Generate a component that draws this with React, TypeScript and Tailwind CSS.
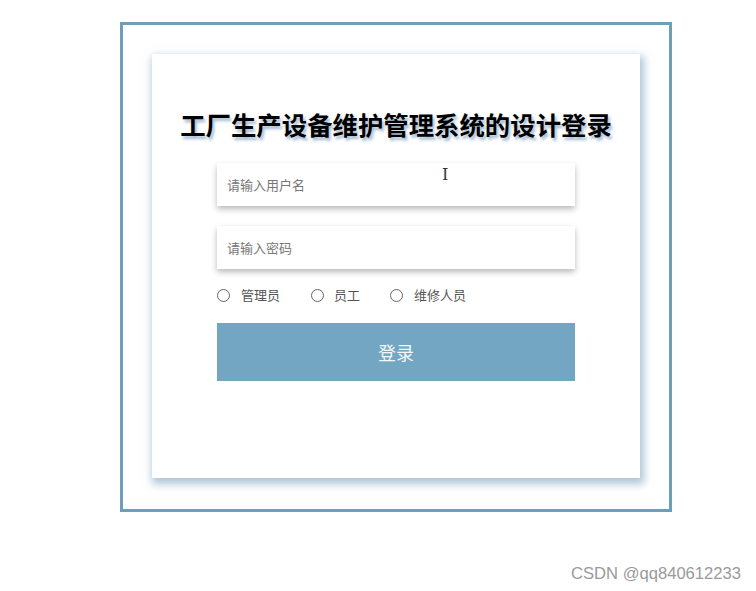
import React from "react";

export default function App() {
  const font = { fontFamily: '"Noto Sans CJK SC", "Microsoft YaHei", sans-serif' };
  return (
    <div className="relative w-[756px] h-[591px] bg-white" style={font}>
      <div className="pt-[22px] pl-[120px]">
        <div className="w-[552px] h-[490px] border-[3px] border-[#6d9fba] p-[29px] pb-0">
          <div className="w-[488px] h-[424px] bg-white shadow-[2px_4px_8px_2px_rgba(104,150,180,0.55)] flex flex-col items-center pt-[52px]">
            <h1 className="text-[25.4px] font-bold leading-[36px] text-black [text-shadow:2px_3px_3px_rgba(90,130,170,0.55)] whitespace-nowrap">
              工厂生产设备维护管理系统的设计登录
            </h1>
            <div className="w-[358px] mt-[21px] flex flex-col">
              <div className="h-[43px] bg-white shadow-[0_3px_6px_rgba(0,0,0,0.28)] flex items-center pl-[10px] text-[13px] text-[#777]">
                请输入用户名
              </div>
              <div className="h-[43px] mt-[20px] bg-white shadow-[0_3px_6px_rgba(0,0,0,0.28)] flex items-center pl-[10px] text-[13px] text-[#777]">
                请输入密码
              </div>
              <div className="flex items-center mt-[16px] h-[20px] text-[13px] text-[#555]">
                <span className="w-[13px] h-[13px] rounded-full border border-[#666]" />
                <span className="ml-[11px]">管理员</span>
                <span className="ml-[31px] w-[13px] h-[13px] rounded-full border border-[#666]" />
                <span className="ml-[10px]">员工</span>
                <span className="ml-[30px] w-[13px] h-[13px] rounded-full border border-[#666]" />
                <span className="ml-[11px]">维修人员</span>
              </div>
              <div className="h-[58px] mt-[18px] bg-[#72a6c3] flex items-center justify-center text-[18px] text-[#f2f6f8]">
                登录
              </div>
            </div>
          </div>
        </div>
      </div>
      <div className="absolute left-[442px] top-[167px] text-[#333] text-[16px] leading-none" style={{ fontFamily: '"DejaVu Serif", serif' }}>
        I
      </div>
      <div
        className="absolute right-[15px] top-[562px] text-[16.6px] text-[#9a9a9a]"
        style={{ fontFamily: '"Liberation Sans", Arial, sans-serif' }}
      >
        CSDN @qq840612233
      </div>
    </div>
  );
}
